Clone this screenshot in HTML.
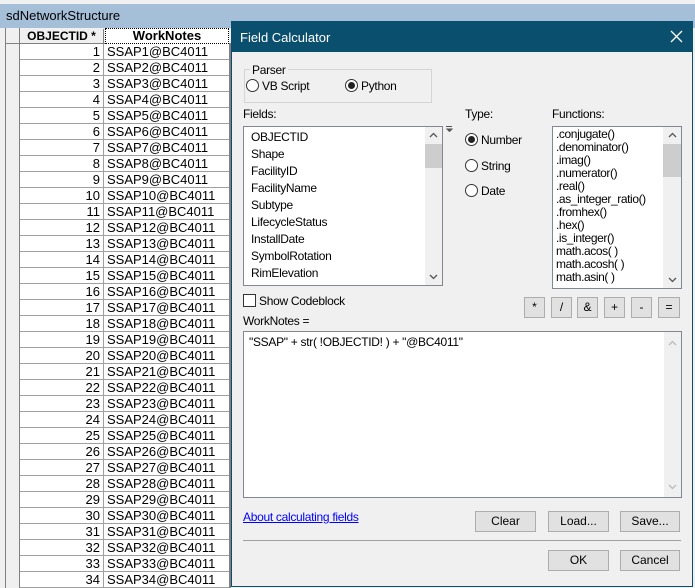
<!DOCTYPE html>
<html><head><meta charset="utf-8"><style>
*{margin:0;padding:0;box-sizing:border-box}
body{width:695px;height:587px;overflow:hidden;background:#f0f0f0;position:relative;font-family:"Liberation Sans",sans-serif;font-size:12px;color:#000}
.a{position:absolute}
.tb{left:0;top:4px;width:695px;height:24px;background:#a6bfd9;font-size:13px;padding:4px 0 0 6px}
.grid{left:0;top:28px;width:231px;height:560px;background:#fff}
.row{position:absolute;left:0;width:231px;height:16px;border-bottom:1px solid #a0a0a0;font-size:13px;line-height:15px}
.row .s{position:absolute;left:6px;top:0;width:14px;height:16px;background:#f0f0f0;border-right:1px solid #808080}
.row .i{position:absolute;left:20px;width:84px;text-align:right;padding-right:3px;top:0;border-right:1px solid #a0a0a0;height:16px}
.row .w{position:absolute;left:107px;top:0}
.dlg{left:231px;top:21px;width:462px;height:566px;background:#f0f0f0;border:1px solid #0b4f6f;border-top:none}
.title{left:231px;top:21px;width:462px;height:31px;background:#0b4f6f;color:#fff;font-size:13px;padding:9px 0 0 9px}
.box{background:#fff;border:1px solid #828790}
.rad{position:absolute;width:13px;height:13px;border:1px solid #333;border-radius:50%;background:#fff}
.rad.on::after{content:"";position:absolute;left:2px;top:2px;width:7px;height:7px;border-radius:50%;background:#222}
.btn{position:absolute;background:#e1e1e1;border:1px solid #adadad;text-align:center;font-size:12px}
.d{letter-spacing:-0.3px}
.li{position:absolute;left:7px;font-size:12px;letter-spacing:-0.3px}
.fn{position:absolute;left:3px;font-size:12px;letter-spacing:-0.4px}
.sb{position:absolute;background:#f0f0f0}
</style></head><body>
<div class="a tb">sdNetworkStructure</div>
<div class="a grid" id="g"></div>
<div class="a" style="left:0;top:28px;width:6px;height:560px;background:#f0f0f0;border-right:1px solid #808080"></div>
<div class="a" style="left:229px;top:28px;width:2px;height:560px;background:#808080"></div>
<div class="a" style="left:6px;top:28px;width:225px;height:16px;background:#f0f0f0;border-bottom:1px solid #808080;font-weight:bold;font-size:12px">
<div class="a" style="left:0;top:0;width:14px;height:16px;border-right:1px solid #808080"></div>
<div class="a" style="left:14px;width:84px;top:1px;text-align:center;height:15px;border-right:1px solid #808080">OBJECTID *</div>
<div class="a" style="left:99px;width:124px;top:0;height:16px;text-align:center;background:#fff;border:1px dotted #000;font-size:13px;line-height:14px">WorkNotes</div>
</div>
<script>
var g=document.getElementById('g'),h='';
for(var n=1;n<=34;n++){h+='<div class="row" style="top:'+(16*n)+'px"><div class="s"></div><div class="i">'+n+'</div><div class="w">SSAP'+n+'@BC4011</div></div>';}
g.innerHTML=h;
</script>
<div class="a dlg"></div>
<div class="a title">Field Calculator</div>
<svg class="a" style="left:670px;top:30px" width="13" height="13"><path d="M1 1L12 12M12 1L1 12" stroke="#fff" stroke-width="1.3"/></svg>

<div class="a" style="left:244px;top:69px;width:188px;height:34px;border:1px solid #d5d5d5"></div>
<div class="a d" style="left:250px;top:63px;background:#f0f0f0;padding:0 2px">Parser</div>
<div class="rad" style="left:246px;top:79px"></div><div class="a d" style="left:262px;top:79px">VB Script</div>
<div class="rad on" style="left:345px;top:79px"></div><div class="a d" style="left:361px;top:79px">Python</div>

<div class="a d" style="left:243px;top:107px">Fields:</div>
<div class="a box" style="left:243px;top:126px;width:200px;height:160px">
<div class="li" style="top:3px">OBJECTID</div><div class="li" style="top:20px">Shape</div><div class="li" style="top:37px">FacilityID</div><div class="li" style="top:54px">FacilityName</div><div class="li" style="top:71px">Subtype</div><div class="li" style="top:88px">LifecycleStatus</div><div class="li" style="top:105px">InstallDate</div><div class="li" style="top:122px">SymbolRotation</div><div class="li" style="top:139px">RimElevation</div>
<div class="sb" style="left:181px;top:0;width:17px;height:158px"></div>
<div class="a" style="left:181px;top:17px;width:17px;height:24px;background:#cdcdcd"></div>
<svg class="a" style="left:185px;top:5px" width="9" height="6"><path d="M1 5L4.5 1.5L8 5" stroke="#555" fill="none" stroke-width="1.3"/></svg>
<svg class="a" style="left:185px;top:147px" width="9" height="6"><path d="M1 1L4.5 4.5L8 1" stroke="#555" fill="none" stroke-width="1.3"/></svg>
</div>
<svg class="a" style="left:446px;top:126px" width="7" height="6"><path d="M0 0.5H6M1 3H6L3.5 5.5Z" stroke="#555" fill="#555" stroke-width="1"/></svg>

<div class="a d" style="left:465px;top:107px">Type:</div>
<div class="rad on" style="left:465px;top:133px"></div><div class="a d" style="left:481px;top:133px">Number</div>
<div class="rad" style="left:465px;top:159px"></div><div class="a d" style="left:481px;top:159px">String</div>
<div class="rad" style="left:465px;top:184px"></div><div class="a d" style="left:481px;top:184px">Date</div>

<div class="a d" style="left:552px;top:107px">Functions:</div>
<div class="a box" style="left:552px;top:126px;width:130px;height:163px;overflow:hidden">
<div class="fn" style="top:0">.conjugate()</div><div class="fn" style="top:13px">.denominator()</div><div class="fn" style="top:26px">.imag()</div><div class="fn" style="top:39px">.numerator()</div><div class="fn" style="top:52px">.real()</div><div class="fn" style="top:65px">.as_integer_ratio()</div><div class="fn" style="top:78px">.fromhex()</div><div class="fn" style="top:91px">.hex()</div><div class="fn" style="top:104px">.is_integer()</div><div class="fn" style="top:117px">math.acos( )</div><div class="fn" style="top:130px">math.acosh( )</div><div class="fn" style="top:143px">math.asin( )</div>
<div class="sb" style="left:110px;top:0;width:18px;height:161px"></div>
<div class="a" style="left:110px;top:17px;width:18px;height:33px;background:#cdcdcd"></div>
<svg class="a" style="left:115px;top:5px" width="9" height="6"><path d="M1 5L4.5 1.5L8 5" stroke="#555" fill="none" stroke-width="1.3"/></svg>
<svg class="a" style="left:115px;top:150px" width="9" height="6"><path d="M1 1L4.5 4.5L8 1" stroke="#555" fill="none" stroke-width="1.3"/></svg>
</div>

<div class="a" style="left:243px;top:294px;width:13px;height:13px;background:#fff;border:1px solid #333"></div>
<div class="a d" style="left:259px;top:294px">Show Codeblock</div>
<div class="btn" style="left:524px;top:297px;width:21px;height:21px;line-height:19px">*</div>
<div class="btn" style="left:551px;top:297px;width:21px;height:21px;line-height:19px">/</div>
<div class="btn" style="left:577px;top:297px;width:21px;height:21px;line-height:19px">&amp;</div>
<div class="btn" style="left:604px;top:297px;width:21px;height:21px;line-height:19px">+</div>
<div class="btn" style="left:631px;top:297px;width:21px;height:21px;line-height:19px">-</div>
<div class="btn" style="left:658px;top:297px;width:22px;height:21px;line-height:19px">=</div>

<div class="a d" style="left:243px;top:314px">WorkNotes =</div>
<div class="a box" style="left:243px;top:331px;width:439px;height:167px">
<div class="a d" style="left:5px;top:3px">"SSAP" + str( !OBJECTID! ) + "@BC4011"</div>
<div class="sb" style="left:420px;top:0;width:17px;height:165px"></div>
<svg class="a" style="left:424px;top:8px" width="9" height="6"><path d="M1 5L4.5 1.5L8 5" stroke="#bbb" fill="none" stroke-width="1.3"/></svg>
<svg class="a" style="left:424px;top:152px" width="9" height="6"><path d="M1 1L4.5 4.5L8 1" stroke="#bbb" fill="none" stroke-width="1.3"/></svg>
</div>

<div class="a d" style="left:243px;top:510px;color:#0000ff;text-decoration:underline">About calculating fields</div>
<div class="btn" style="left:475px;top:511px;width:61px;height:21px;line-height:19px">Clear</div>
<div class="btn" style="left:548px;top:511px;width:61px;height:21px;line-height:19px">Load...</div>
<div class="btn" style="left:620px;top:511px;width:60px;height:21px;line-height:19px">Save...</div>
<div class="a" style="left:243px;top:540px;width:438px;height:1px;background:#a0a0a0"></div>
<div class="btn" style="left:548px;top:550px;width:61px;height:21px;line-height:19px">OK</div>
<div class="btn" style="left:620px;top:550px;width:60px;height:21px;line-height:19px">Cancel</div>
</body></html>
